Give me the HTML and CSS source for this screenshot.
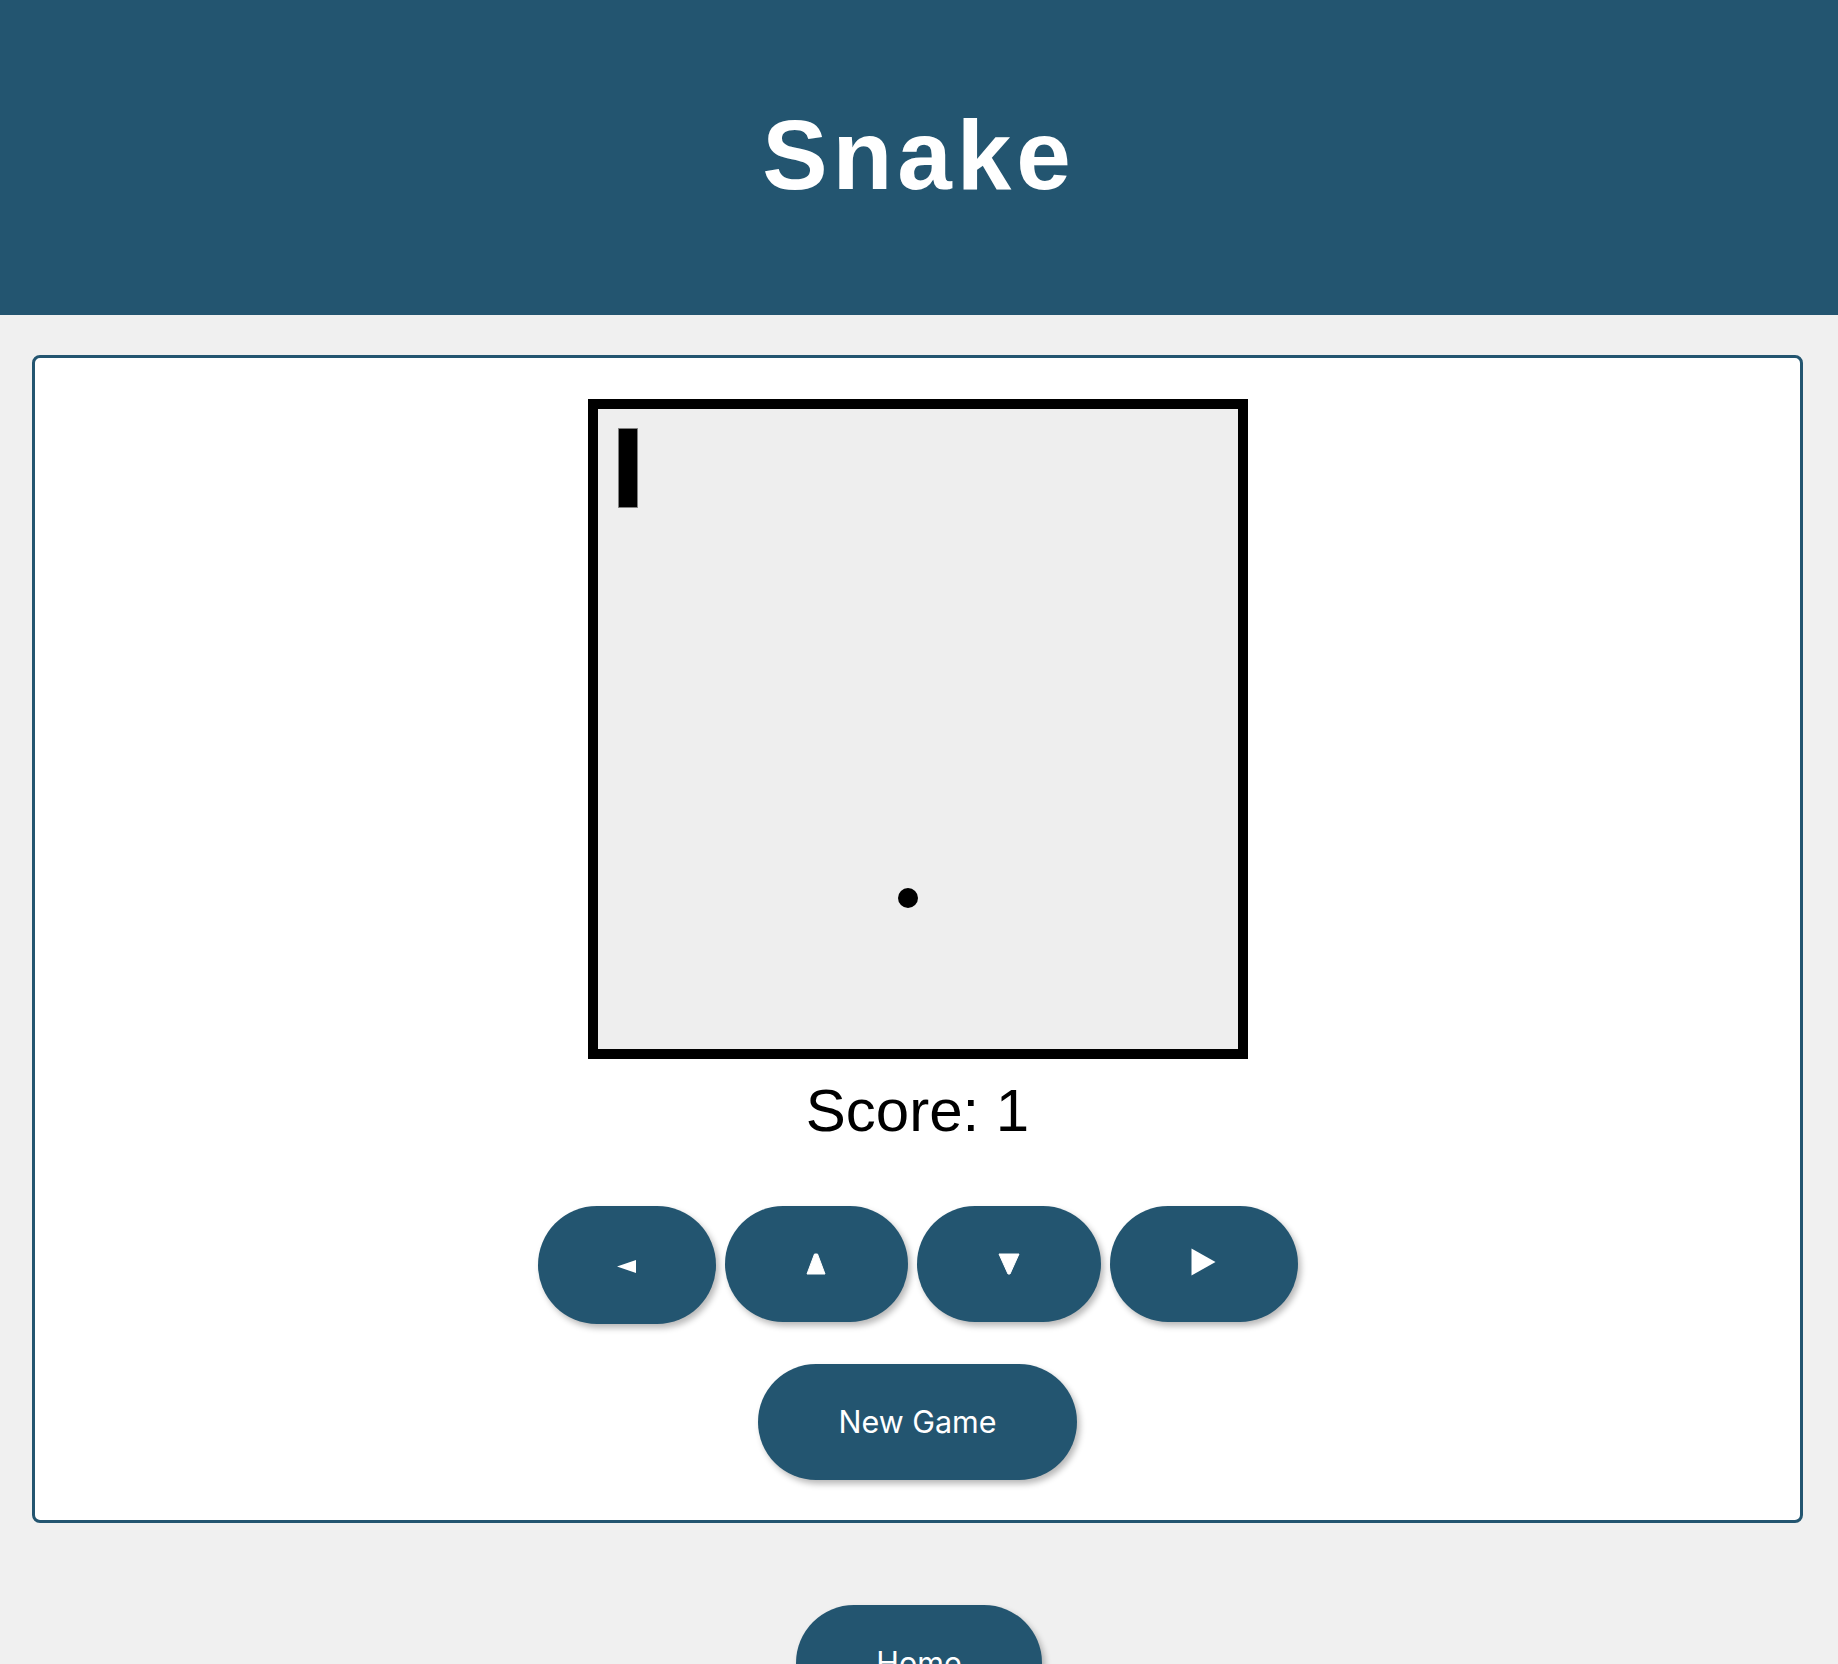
FILE: index.html
```html
<!DOCTYPE html>
<html lang="en">
<head>
<meta charset="utf-8">
<title>Snake</title>
<link rel="stylesheet" href="styles.css">
</head>
<body>
<header class="site-header">
  <h1 class="title">Snake</h1>
</header>
<main class="game-card">
  <div class="board">
    <svg class="board-svg" width="640" height="640" viewBox="0 0 640 640">
      <rect x="20.4" y="19.4" width="19.2" height="79.2" fill="#000" stroke="#8a8a8a" stroke-width="0.8"/>
      <circle cx="310" cy="489" r="10" fill="#000"/>
    </svg>
  </div>
  <p class="score">Score: 1</p>
  <div class="controls">
    <button class="btn btn-dir btn-left" aria-label="Left">
      <span class="icon icon-left"><svg width="19" height="13" viewBox="0 0 19 13"><polygon points="0,6.5 19,0 19,13" fill="#fff"/></svg></span>
    </button>
    <button class="btn btn-dir btn-up" aria-label="Up">
      <span class="icon icon-up"><svg width="20" height="22" viewBox="0 0 20 22"><polygon points="8.5,1 11.5,1 19,21 1,21" fill="#fff" stroke="#fff" stroke-width="1" stroke-linejoin="round"/></svg></span>
    </button>
    <button class="btn btn-dir btn-down" aria-label="Down">
      <span class="icon icon-down"><svg width="22" height="22" viewBox="0 0 22 22"><polygon points="1,1 21,1 12,21 10,21" fill="#fff" stroke="#fff" stroke-width="1" stroke-linejoin="round"/></svg></span>
    </button>
    <button class="btn btn-dir btn-right" aria-label="Right">
      <span class="icon icon-right"><svg width="25" height="28" viewBox="0 0 25 28"><polygon points="0.5,0.5 24.5,14 0.5,27.5" fill="#fff"/></svg></span>
    </button>
  </div>
  <button class="btn btn-new">New Game</button>
</main>
<div class="home-row">
  <button class="btn btn-home">Home</button>
</div>
</body>
</html>
```
FILE: styles.css
```css
html, body {
  margin: 0;
  padding: 0;
}

body {
  background: #f0f0f0;
  font-family: "Liberation Sans", Arial, sans-serif;
  color: #000;
}

.site-header {
  height: 315px;
  background: #235570;
  display: flex;
  align-items: center;
  justify-content: center;
  box-sizing: border-box;
  padding-bottom: 5px;
}

.title {
  margin: 0;
  color: #fff;
  font-family: "Liberation Sans", Arial, sans-serif;
  font-weight: bold;
  font-size: 98px;
  letter-spacing: 5px;
  line-height: 1.15;
}

.game-card {
  margin: 40px 35px 0 32px;
  border: 3px solid #235570;
  border-radius: 8px;
  background: #fff;
  display: flex;
  flex-direction: column;
  align-items: center;
  padding: 41px 0 40px;
}

.board {
  width: 640px;
  height: 640px;
  border: 10px solid #000;
  background: #eeeeee;
}

.board-svg {
  display: block;
}

.score {
  margin: 19px 0 0;
  font-size: 60px;
  line-height: 66px;
}

.controls {
  margin-top: 62px;
  display: flex;
  gap: 9px;
  align-items: flex-start;
}

.btn {
  border: none;
  background: #235570;
  color: #fff;
  font-family: Inter, "Liberation Sans", sans-serif;
  font-size: 30.5px;
  line-height: 36px;
  padding: 40px 80px;
  border-radius: 60px;
  box-shadow: 3px 4px 6px rgba(0, 0, 0, 0.28);
  cursor: pointer;
}

.btn-dir {
  padding: 40px 78px;
}

.btn-left {
  padding-bottom: 42px;
}

.icon {
  display: flex;
  align-items: center;
  justify-content: center;
  height: 36px;
}

.icon svg {
  display: block;
}

.icon-left {
  width: 22px;
  padding-top: 5px;
  box-sizing: border-box;
}

.icon-up {
  width: 27px;
}

.icon-down {
  width: 28px;
}

.icon-right {
  width: 32px;
  padding-bottom: 5px;
  box-sizing: border-box;
}

.btn-new {
  margin-top: 40px;
}

.home-row {
  display: flex;
  justify-content: center;
  margin-top: 82px;
  padding-bottom: 40px;
}
```
